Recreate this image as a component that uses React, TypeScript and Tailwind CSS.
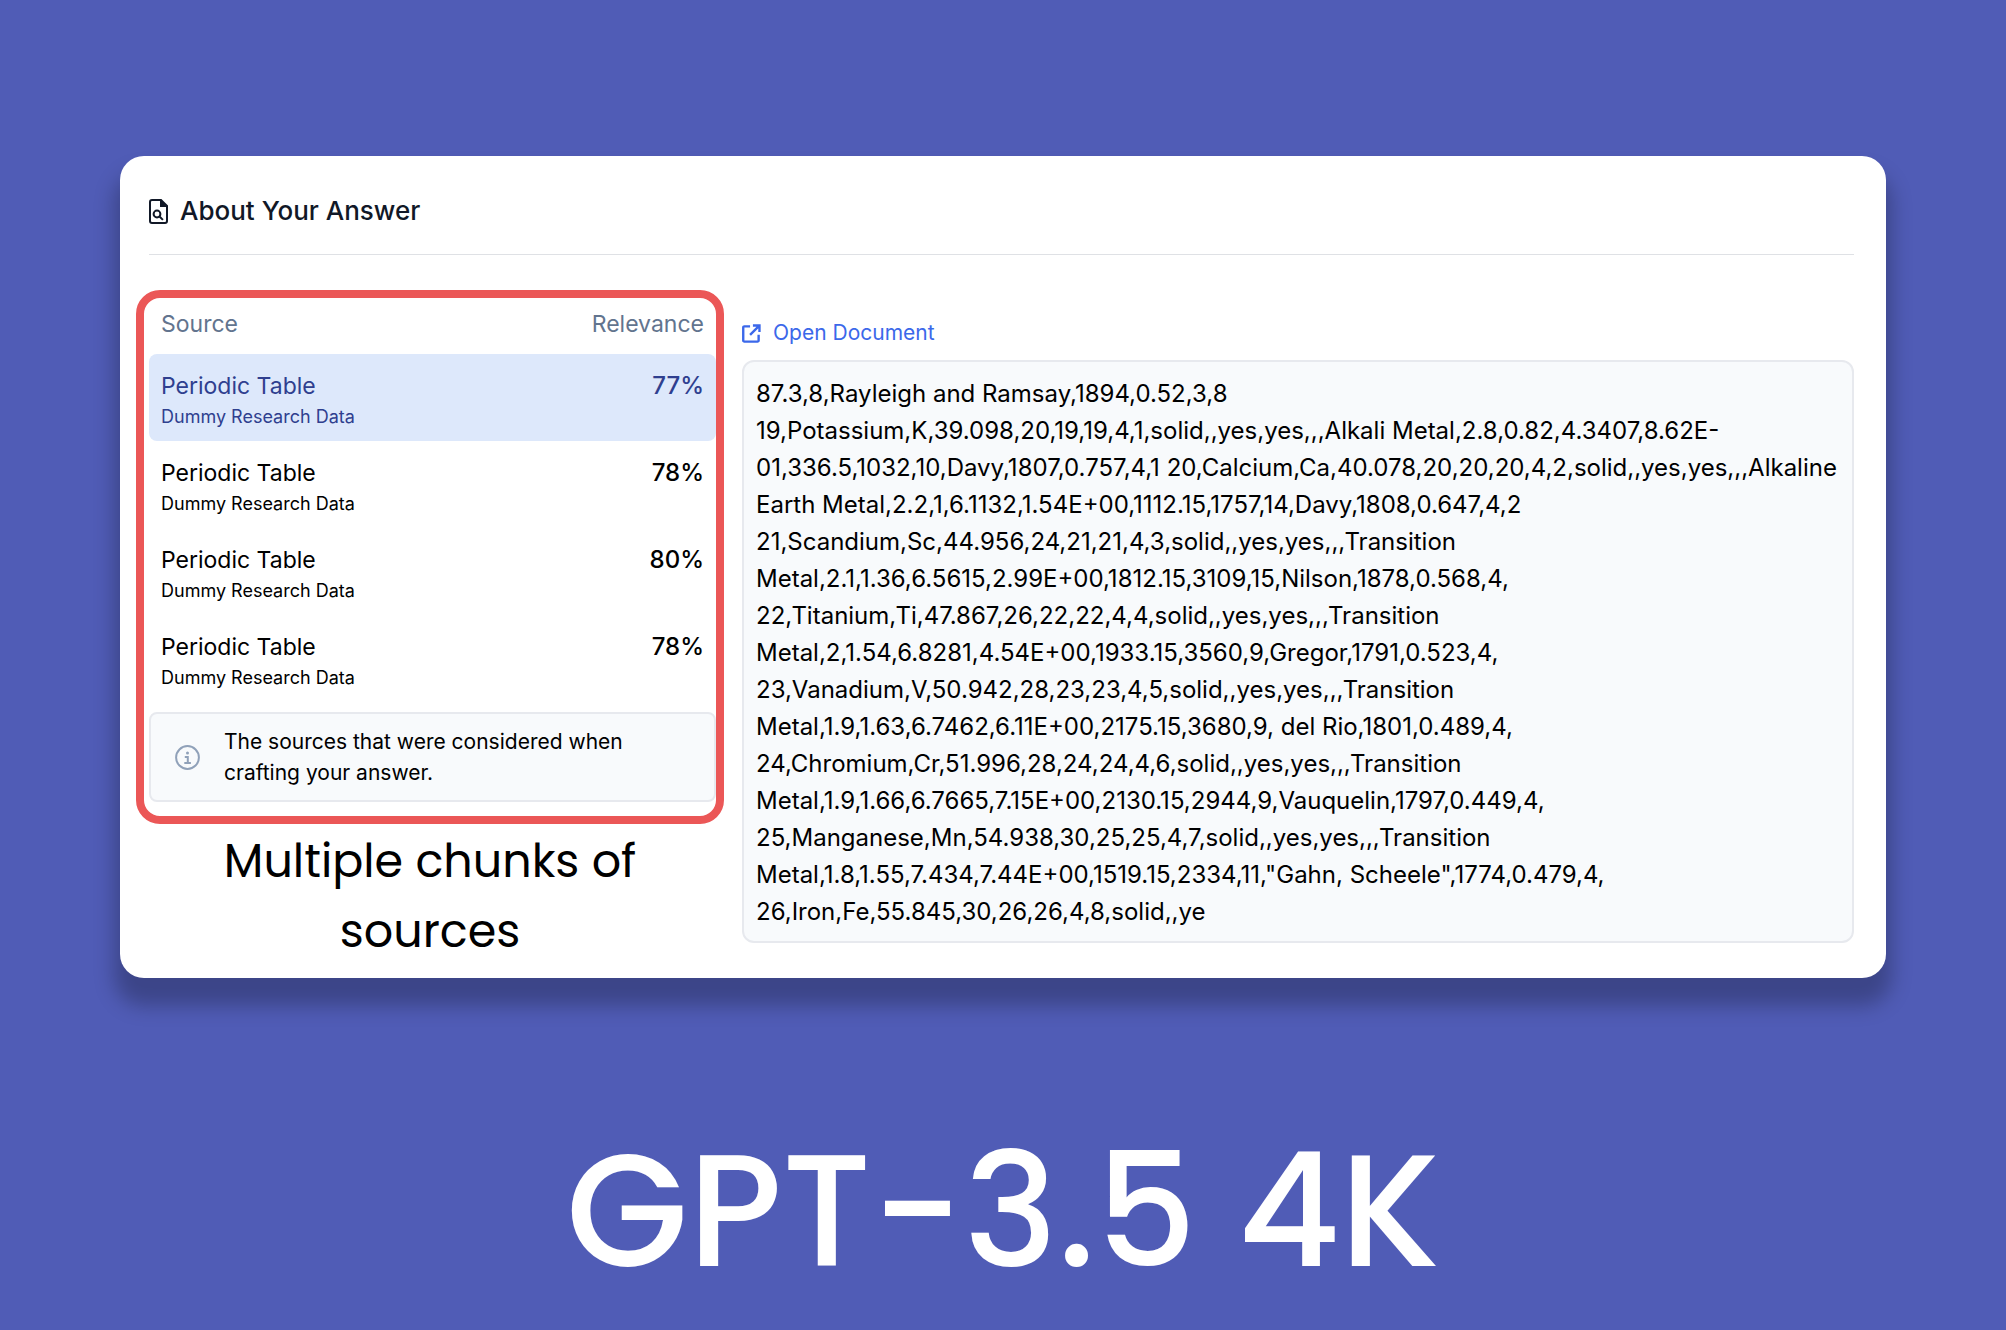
import clsx from "clsx";

interface SourceType {
  title: string;
  collection: string;
  relevance: string;
  selected?: boolean;
}

export default function App() {
  return (
    <main className="min-h-screen bg-[#505cb6] px-[120px] pt-[156px] font-[Inter,sans-serif] text-black">
      <section className="rounded-3xl bg-white pt-9 pr-8 pb-3 pl-[29px] shadow-[0_22px_20px_6px_rgba(0,0,0,0.25)]">
        <header className="flex items-center gap-3 border-b border-[#dfe1e5] pb-6 text-[#111827]">
          <FileSearchIcon />
          <h1 className="text-[26px] leading-[38px] font-medium">About Your Answer</h1>
        </header>
        <div className="flex gap-[18px] pt-[35px]">
          <div className="-ml-[13px] w-[588px] shrink-0">
            <SourceList />
            <p className="px-10 pt-0.5 text-center font-[Poppins,Inter,sans-serif] text-[46px] leading-[70px]">
              Multiple chunks of sources
            </p>
          </div>
          <DocumentPreview />
        </div>
      </section>
      <h2 className="pt-[115px] text-center font-[Poppins,Inter,sans-serif] text-[158px] leading-[236px] font-medium text-white">
        GPT-3.5 4K
      </h2>
    </main>
  );
}

function SourceList() {
  return (
    <div className="rounded-3xl border-8 border-[#eb5757] pb-3.5 pl-[5px]">
      <table className="w-full border-separate border-spacing-0">
        <thead>
          <tr className="text-[23px] leading-8 text-slate-500">
            <th className="px-3 pt-2.5 pb-3.5 text-left font-normal">Source</th>
            <th className="px-3 pt-2.5 pb-3.5 text-right font-normal">Relevance</th>
          </tr>
        </thead>
        <tbody>
          {sources.map((source, index) => (
            <SourceRow key={index} source={source} />
          ))}
        </tbody>
      </table>
      <div className="mt-2.5 flex items-center gap-6 rounded-lg border-2 border-[#e7e9ee] bg-slate-50 px-6 py-3">
        <InfoIcon />
        <p className="text-[21px] leading-[31px]">
          The sources that were considered when crafting your answer.
        </p>
      </div>
    </div>
  );
}

function SourceRow({ source }: { source: SourceType }) {
  return (
    <tr className={clsx("align-top", source.selected && "bg-[#dde8fb] text-[#2f3f8f]")}>
      <td className="rounded-l-lg px-3 pt-3.5 pb-3">
        <div className="text-[23px] leading-9">{source.title}</div>
        <div className="text-lg leading-[25px]">{source.collection}</div>
      </td>
      <td className="rounded-r-lg px-3 pt-3.5 pb-3 text-right text-2xl leading-9 font-medium">
        {source.relevance}
      </td>
    </tr>
  );
}

function DocumentPreview() {
  return (
    <div className="min-w-0 flex-1 pt-7">
      <a href="#" className="flex items-center gap-3 text-[21px] leading-[30px] text-[#3b68ea]">
        <OpenIcon />
        Open Document
      </a>
      <div className="mt-3 rounded-xl border-2 border-[#e7e9ee] bg-slate-50 px-3 pt-[13px] pb-[11px] text-2xl leading-[37px]">
        {chunk.map((line) => (
          <p key={line}>{line}</p>
        ))}
      </div>
    </div>
  );
}

function FileSearchIcon() {
  return (
    <svg
      className="h-[25px] w-[19px] shrink-0"
      viewBox="0 0 19 25"
      fill="none"
      stroke="currentColor"
      strokeWidth="2"
      aria-hidden="true"
    >
      <path d="M3 1h9l6 6v15a2 2 0 0 1-2 2H3a2 2 0 0 1-2-2V3a2 2 0 0 1 2-2z" />
      <path d="M11 1v7h7l-6-7z" fill="currentColor" stroke="none" />
      <circle cx="8" cy="15" r="3.4" />
      <path d="M10.5 17.5l3.4 3.4" />
    </svg>
  );
}

function OpenIcon() {
  return (
    <svg
      className="h-[19px] w-[19px] shrink-0"
      viewBox="0 0 20 20"
      fill="none"
      stroke="currentColor"
      strokeWidth="2.5"
      aria-hidden="true"
    >
      <path d="M8.5 2.5h-6a1.2 1.2 0 0 0-1.2 1.2v13.6a1.2 1.2 0 0 0 1.2 1.2h13.8a1.2 1.2 0 0 0 1.2-1.2v-6" />
      <path d="M11.5 1.6h6.9v6.9M18.2 1.8L8.5 11.5" />
    </svg>
  );
}

function InfoIcon() {
  return (
    <svg
      className="h-[25px] w-[25px] shrink-0 text-slate-400"
      viewBox="0 0 25 25"
      fill="none"
      stroke="currentColor"
      strokeWidth="2"
      aria-hidden="true"
    >
      <circle cx="12.5" cy="12.5" r="11.4" />
      <circle cx="12.5" cy="8" r="1.5" fill="currentColor" stroke="none" />
      <path d="M9.8 12h3v6M9.3 17.9h6.6" />
    </svg>
  );
}

const sources: SourceType[] = [
  {
    title: "Periodic Table",
    collection: "Dummy Research Data",
    relevance: "77%",
    selected: true,
  },
  {
    title: "Periodic Table",
    collection: "Dummy Research Data",
    relevance: "78%",
  },
  {
    title: "Periodic Table",
    collection: "Dummy Research Data",
    relevance: "80%",
  },
  {
    title: "Periodic Table",
    collection: "Dummy Research Data",
    relevance: "78%",
  },
];

const chunk: string[] = [
  "87.3,8,Rayleigh and Ramsay,1894,0.52,3,8",
  "19,Potassium,K,39.098,20,19,19,4,1,solid,,yes,yes,,,Alkali Metal,2.8,0.82,4.3407,8.62E-",
  "01,336.5,1032,10,Davy,1807,0.757,4,1 20,Calcium,Ca,40.078,20,20,20,4,2,solid,,yes,yes,,,Alkaline",
  "Earth Metal,2.2,1,6.1132,1.54E+00,1112.15,1757,14,Davy,1808,0.647,4,2",
  "21,Scandium,Sc,44.956,24,21,21,4,3,solid,,yes,yes,,,Transition",
  "Metal,2.1,1.36,6.5615,2.99E+00,1812.15,3109,15,Nilson,1878,0.568,4,",
  "22,Titanium,Ti,47.867,26,22,22,4,4,solid,,yes,yes,,,Transition",
  "Metal,2,1.54,6.8281,4.54E+00,1933.15,3560,9,Gregor,1791,0.523,4,",
  "23,Vanadium,V,50.942,28,23,23,4,5,solid,,yes,yes,,,Transition",
  "Metal,1.9,1.63,6.7462,6.11E+00,2175.15,3680,9, del Rio,1801,0.489,4,",
  "24,Chromium,Cr,51.996,28,24,24,4,6,solid,,yes,yes,,,Transition",
  "Metal,1.9,1.66,6.7665,7.15E+00,2130.15,2944,9,Vauquelin,1797,0.449,4,",
  "25,Manganese,Mn,54.938,30,25,25,4,7,solid,,yes,yes,,,Transition",
  'Metal,1.8,1.55,7.434,7.44E+00,1519.15,2334,11,"Gahn, Scheele",1774,0.479,4,',
  "26,Iron,Fe,55.845,30,26,26,4,8,solid,,ye",
];
